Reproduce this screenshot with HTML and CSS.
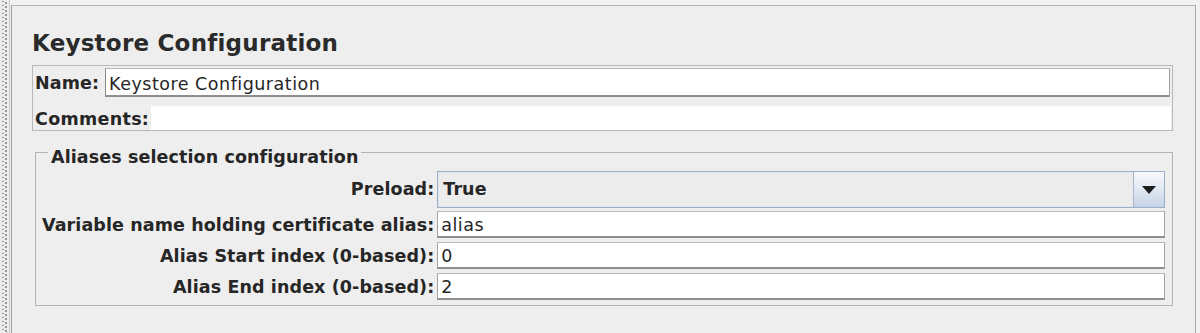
FILE: index.html
```html
<!DOCTYPE html>
<html>
<head>
<meta charset="utf-8">
<link rel="stylesheet" href="styles.css">
</head>
<body>
<div class="app">
  <div class="grip"></div>
  <div class="splitter"></div>
  <div class="panel">
    <h1 class="title">Keystore Configuration</h1>
    <div class="namebox">
      <div class="name-row">
        <span class="lbl">Name:</span>
        <div class="field name-field">Keystore Configuration</div>
      </div>
      <div class="comments-row">
        <span class="lbl">Comments:</span>
        <div class="comments-area"></div>
      </div>
    </div>
    <fieldset class="group">
      <legend class="legend">Aliases selection configuration</legend>
      <div class="form">
        <span class="lbl right">Preload:</span>
        <div class="combo">
          <span class="combo-value">True</span>
          <span class="combo-btn"><svg width="14" height="8" viewBox="0 0 14 8"><path d="M0 0 H14 L7 8 Z" fill="#1e1e1e"/></svg></span>
        </div>
        <span class="lbl right">Variable name holding certificate alias:</span>
        <div class="field">alias</div>
        <span class="lbl right">Alias Start index (0-based):</span>
        <div class="field">0</div>
        <span class="lbl right">Alias End index (0-based):</span>
        <div class="field">2</div>
      </div>
    </fieldset>
  </div>
</div>
</body>
</html>
```
FILE: styles.css
```css
html, body {
  margin: 0;
  padding: 0;
  background: #f2f2f2;
  width: 1200px;
  height: 333px;
  overflow: hidden;
  font-family: "DejaVu Sans", sans-serif;
  color: #262626;
}

.app {
  display: flex;
  height: 333px;
}

.grip {
  width: 9px;
  flex: none;
  background-color: #ececec;
  background-image:
    radial-gradient(circle at 3px 1.5px, #9a9a9a 0.8px, transparent 1.1px),
    radial-gradient(circle at 6px 3px, #9a9a9a 0.8px, transparent 1.1px);
  background-size: 9px 4px, 9px 4px;
}

.splitter {
  width: 1px;
  flex: none;
  border-left: 1px solid #c9c9c9;
  background: #efefef;
}

.panel {
  flex: 1;
  margin-top: 5px;
  margin-right: 4px;
  border-top: 1px solid #b4b4b4;
  border-right: 1px solid #a8a8a8;
  border-left: 1px solid #9c9c9c;
  background: #eeeeee;
  padding: 22px 0 0 20px;
}

.title {
  margin: 0;
  font-size: 23px;
  line-height: 30px;
  font-weight: bold;
  letter-spacing: 0.23px;
  color: #2a2a2a;
}

.lbl {
  font-weight: bold;
  font-size: 17.5px;
  letter-spacing: 0.1px;
  line-height: 22px;
  white-space: nowrap;
  color: #262626;
}

.namebox {
  margin-top: 7px;
  width: 1141px;
  border: 1px solid #b9b9b9;
  padding: 2px 1px 0 2px;
  height: 66px;
  box-sizing: border-box;
  display: flex;
  flex-direction: column;
}

.name-row {
  display: flex;
  align-items: center;
  gap: 6px;
}

.field {
  box-sizing: border-box;
  height: 27px;
  background: #ffffff;
  border: 1px solid #a3a3a3;
  border-top-color: #b8b8b8;
  border-bottom: 2px solid #8f8f8f;
  padding: 3px 3px 0;
  font-size: 17.5px;
  letter-spacing: 0.5px;
  line-height: 21px;
  color: #262626;
  white-space: nowrap;
}

.name-field {
  flex: 1;
  height: 29px;
  padding-top: 5px;
  border-left-color: #8a8a8a;
  margin-right: 1px;
}

.comments-row {
  flex: 1;
  display: flex;
  align-items: flex-end;
  gap: 2px;
}

.comments-row .lbl {
  margin-bottom: 0;
  letter-spacing: 0.3px;
}

.comments-area {
  flex: 1;
  height: 24px;
  background: #ffffff;
}

.group {
  margin: 6px 0 0 3px;
  width: 1138px;
  box-sizing: border-box;
  border: 1px solid #b3b3b3;
  padding: 3px 7px 5px 6px;
  min-inline-size: 0;
}

.legend {
  font-weight: bold;
  font-size: 17.5px;
  letter-spacing: 0.1px;
  line-height: 22px;
  padding: 9px 3px 0 3px;
  margin-left: 6px;
  color: #262626;
}

.form {
  display: grid;
  grid-template-columns: max-content 1fr;
  column-gap: 3px;
  row-gap: 4px;
  align-items: center;
}

.form .combo {
  margin-bottom: -1px;
}

.right {
  text-align: right;
}

.combo {
  display: flex;
  height: 37px;
  box-sizing: border-box;
  border: 1px solid #9cafc9;
  background: #ececec;
  box-shadow: inset 0 0 0 1px #dfe6ef;
}

.combo-value {
  flex: 1;
  font-weight: bold;
  font-size: 17.5px;
  letter-spacing: 0.1px;
  line-height: 35px;
  padding-left: 5px;
  color: #262626;
}

.combo-btn {
  width: 30px;
  flex: none;
  border-left: 1px solid #a5b6cc;
  background: linear-gradient(#f7f9fc, #e3eaf3 45%, #c4d3e6);
  display: flex;
  align-items: center;
  justify-content: center;
}
```
